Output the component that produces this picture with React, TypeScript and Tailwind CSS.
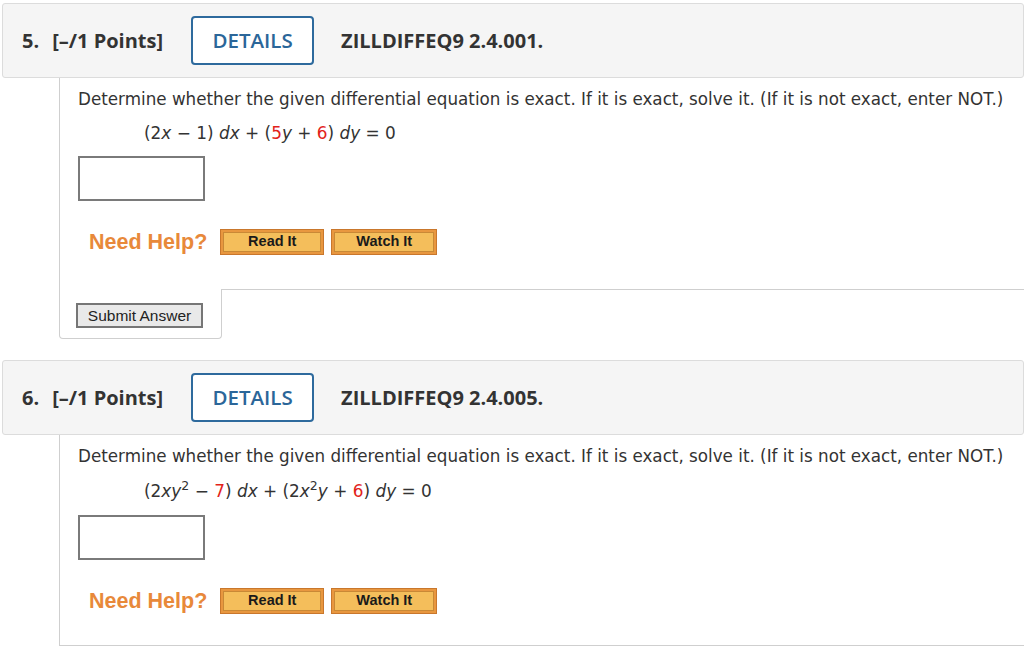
import type { ReactNode } from "react";

const red = "text-[#e2231a]";

/** Orange "Read It" / "Watch It" style button */
const HelpButton = ({ label, width }: { label: string; width: string }) => (
	<div className={`${width} h-[26px] border border-[#c9772c] bg-[#e8973f] p-[2px]`}>
		<div className="flex h-full items-center justify-center border border-[#c98936] bg-[#f4be5b] font-['Liberation_Sans',Arial,sans-serif] text-[14.5px] font-bold text-[#1a1a1a]">
			{label}
		</div>
	</div>
);

const Header = ({ num, code }: { num: string; code: string }) => (
	<div className="ml-[2px] flex h-[75px] items-center rounded-[3px] border border-[#dcdcdc] bg-[#f5f5f5] pl-[19px] font-['Open_Sans',sans-serif] text-[20px] font-bold text-[#333]">
		<span>{num}.</span>
		<span className="ml-[13px]">[–/1 Points]</span>
		<div className="ml-[28px] flex h-[49px] w-[123px] items-center justify-center rounded-[4px] border-2 border-[#2e6a9d] bg-white text-[20.5px] font-semibold text-[#2b6699]">
			DETAILS
		</div>
		<span className="ml-[27px]">{code}</span>
	</div>
);

const Sup = ({ children }: { children: ReactNode }) => (
	<span className="relative -top-[7px] text-[12.5px] leading-none">{children}</span>
);

const Question = ({ num, code, equation, last }: { num: string; code: string; equation: ReactNode; last?: boolean }) => (
	<div>
		<Header num={num} code={code} />
		<div
			className={`ml-[59px] h-[211px] border-l border-[#cfcfcf] pt-[10px] pl-[18px] font-['DejaVu_Sans',Verdana,sans-serif] text-[#333] ${last ? "border-b" : ""}`}
		>
			<p className="text-[16.75px] leading-[22px] whitespace-nowrap">
				Determine whether the given differential equation is exact. If it is exact, solve it. (If it is not exact, enter NOT.)
			</p>
			<p className={`ml-[66px] text-[16.9px] leading-[22px] whitespace-nowrap ${last ? "mt-[13px]" : "mt-[12px]"}`}>
				{equation}
			</p>
			<div className={`h-[45px] w-[127px] border-2 border-[#7a7a7a] bg-white ${last ? "mt-[13px]" : "mt-[12px]"}`} />
			<div className="mt-[25px] ml-[11px] flex h-[32px] items-center">
				<span className="font-['Liberation_Sans',Arial,sans-serif] text-[21.5px] font-bold text-[#e8893a]">Need Help?</span>
				<div className="ml-[13px] flex gap-[7px]">
					<HelpButton label="Read It" width="w-[104px]" />
					<HelpButton label="Watch It" width="w-[106px]" />
				</div>
			</div>
		</div>
		{!last && (
			<div className="ml-[59px] flex">
				<div className="h-[50px] w-[163px] rounded-b-[4px] border-r border-b border-l border-[#cfcfcf] pt-[14px] pl-[16px]">
					<div className="flex h-[25px] w-[127px] items-center justify-center border-2 border-[#767676] bg-[#e9e9e9] font-['Liberation_Sans',Arial,sans-serif] text-[15.5px] text-[#222]">
						Submit Answer
					</div>
				</div>
				<div className="flex-1 border-t border-[#cfcfcf]" />
			</div>
		)}
	</div>
);

const App = () => (
	<div className="min-h-[653px] bg-white pt-[3px]">
		<Question
			num="5"
			code="ZILLDIFFEQ9 2.4.001."
			equation={
				<>
					(2<i>x</i> − 1) <i>dx</i> + (<span className={red}>5</span>
					<i>y</i> + <span className={red}>6</span>) <i>dy</i> = 0
				</>
			}
		/>
		<div className="h-[21px]" />
		<Question
			num="6"
			code="ZILLDIFFEQ9 2.4.005."
			last
			equation={
				<>
					(2<i>xy</i>
					<Sup>2</Sup> − <span className={red}>7</span>) <i>dx</i> + (2<i>x</i>
					<Sup>2</Sup>
					<i>y</i> + <span className={red}>6</span>) <i>dy</i> = 0
				</>
			}
		/>
	</div>
);

export default App;
